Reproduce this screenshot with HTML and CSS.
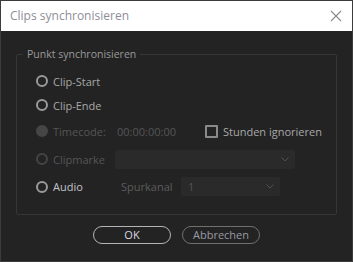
FILE: index.html
```html
<!DOCTYPE html>
<html>
<head>
<meta charset="utf-8">
<link rel="stylesheet" href="styles.css">
</head>
<body>
<div class="window">
  <div class="titlebar">
    <span class="title">Clips synchronisieren</span>
    <svg class="close" width="12" height="12" viewBox="0 0 12 12"><path d="M1 1L11 11M11 1L1 11" stroke="#8a8a8a" stroke-width="1.1" fill="none"/></svg>
  </div>
  <div class="body">
    <fieldset class="group">
      <legend>Punkt synchronisieren</legend>
      <div class="row r24">
        <span class="radio"></span><span class="label">Clip-Start</span>
      </div>
      <div class="row r24">
        <span class="radio"></span><span class="label">Clip-Ende</span>
      </div>
      <div class="row r28 disabled">
        <div class="lab"><span class="radio filled"></span><span class="label">Timecode:</span></div>
        <span class="tc">00:00:00:00</span>
        <span class="check"></span><span class="label on">Stunden ignorieren</span>
      </div>
      <div class="row r28 disabled">
        <div class="lab"><span class="radio dim"></span><span class="label">Clipmarke</span></div>
        <div class="select wide"><span></span><svg width="8" height="5" viewBox="0 0 8 5"><path d="M0.5 0.5L4 4L7.5 0.5" stroke="#505050" fill="none"/></svg></div>
      </div>
      <div class="row r27">
        <div class="lab"><span class="radio"></span><span class="label audio">Audio</span></div>
        <span class="spur">Spurkanal</span>
        <div class="select narrow"><span>1</span><svg width="8" height="5" viewBox="0 0 8 5"><path d="M0.5 0.5L4 4L7.5 0.5" stroke="#505050" fill="none"/></svg></div>
      </div>
    </fieldset>
    <div class="buttons">
      <button class="btn ok">OK</button>
      <button class="btn cancel">Abbrechen</button>
    </div>
  </div>
</div>
</body>
</html>
```
FILE: styles.css
```css
html, body {
  margin: 0;
  padding: 0;
}
body {
  background: #3c3c3c;
  width: 353px;
  height: 262px;
  overflow: hidden;
  font-family: "Open Sans", "Noto Sans", sans-serif;
}
.window {
  margin: 1px 1px 0 1px;
  width: 351px;
  height: 260px;
  display: flex;
  flex-direction: column;
}
.titlebar {
  height: 30px;
  background: #ffffff;
  display: flex;
  align-items: center;
  justify-content: space-between;
  padding: 0 10px 0 9px;
  flex: none;
}
.title {
  font-size: 12px;
  color: #8e8e96;
  margin-top: -1px;
}
.body {
  flex: 1;
  background: #232323;
  padding: 15px 15px 0 15px;
  display: flex;
  flex-direction: column;
}
.group {
  margin: 0;
  border: 1px solid #363636;
  border-radius: 2px;
  padding: 7px 10px 14px 19px;
  min-width: 0;
}
legend {
  font-size: 10.5px;
  color: #9a9a9a;
  padding: 0 4px;
  margin-left: -13px;
  line-height: 16px;
}
.row {
  display: flex;
  align-items: center;
  font-size: 11px;
  color: #a8a8a8;
}
.r24 { height: 24px; }
.r28 { height: 28px; }
.r27 { height: 27px; }
.lab {
  display: flex;
  align-items: center;
  width: 81px;
  flex: none;
}
.radio {
  width: 12px;
  height: 12px;
  box-sizing: border-box;
  border: 2px solid #9a9a9a;
  border-radius: 50%;
  flex: none;
  margin-right: 5px;
}
.radio.filled {
  background: #464646;
  border-color: #464646;
}
.radio.dim {
  border-color: #454545;
}
.disabled .label {
  color: #555555;
}
.disabled .label.on {
  color: #a8a8a8;
}
.label.audio {
  color: #c4c4cc;
}
.tc {
  color: #555555;
  width: 88px;
  flex: none;
}
.check {
  width: 13px;
  height: 13px;
  box-sizing: border-box;
  border: 2px solid #8a8a8a;
  border-radius: 1px;
  margin-right: 5px;
  flex: none;
}
.select {
  height: 19px;
  background: #2a2a2a;
  border-radius: 2px;
  display: flex;
  align-items: center;
  justify-content: space-between;
  padding: 0 6px 0 7px;
  box-sizing: border-box;
  color: #555555;
}
.select.wide {
  width: 180px;
  margin-left: -2px;
}
.select.narrow {
  width: 99px;
}
.spur {
  color: #5c5c5c;
  width: 60px;
  flex: none;
  margin-left: 4px;
}
.buttons {
  display: flex;
  justify-content: center;
  gap: 11px;
  margin-top: 11px;
}
.btn {
  width: 78px;
  height: 18px;
  border-radius: 9px;
  background: transparent;
  font-family: "Open Sans", "Noto Sans", sans-serif;
  font-size: 11px;
  padding: 0;
  line-height: 14px;
}
.btn.ok {
  border: 1px solid #b4b4b4;
  color: #d8d8e0;
}
.btn.cancel {
  border: 1px solid #707070;
  color: #9a9aa4;
}
```
